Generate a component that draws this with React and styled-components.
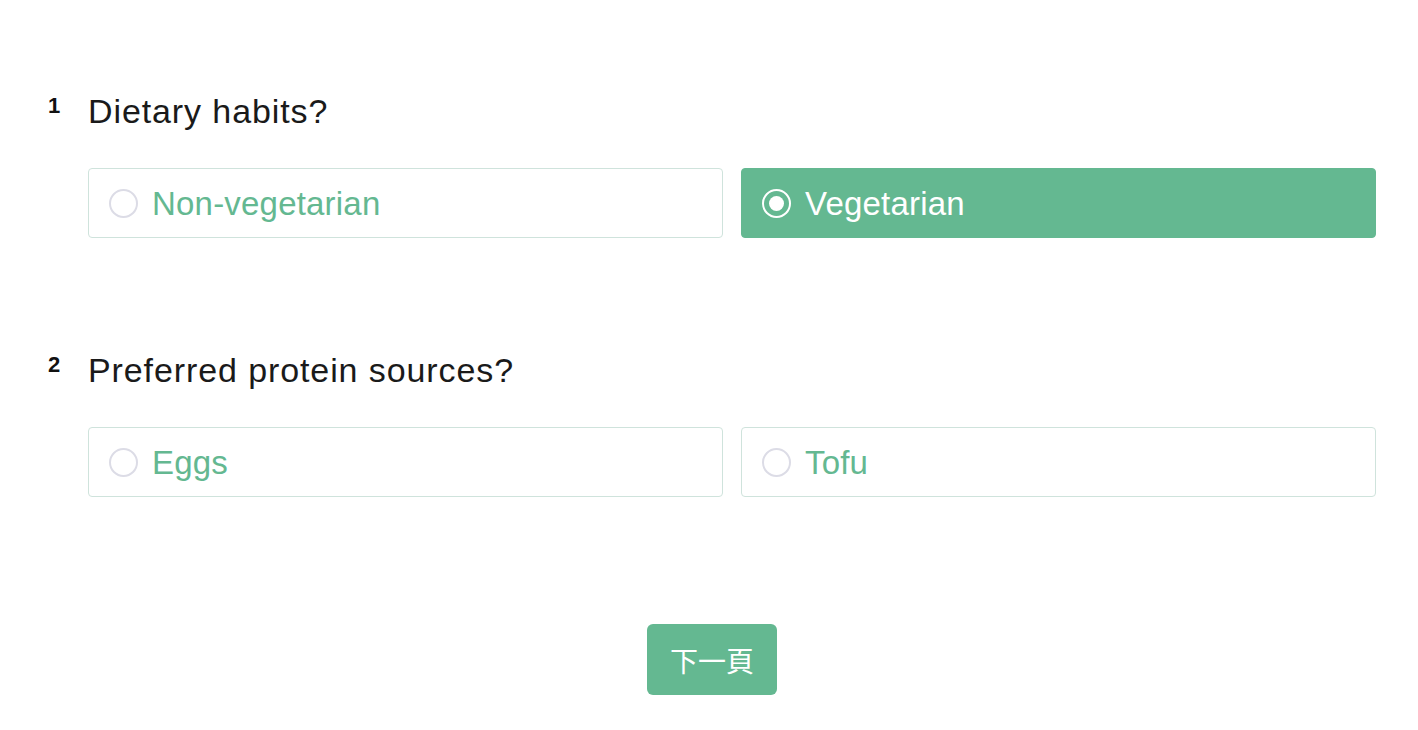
import React, { useState } from 'react';
import styled, { createGlobalStyle } from 'styled-components';

const GlobalStyle = createGlobalStyle`
	body {
		margin: 0;
		background: #fff;
		font-family: "Liberation Sans", Arial, "Noto Sans CJK TC", sans-serif;
	}
`;

const GREEN = '#64b891';

const Page = styled.div`
	padding: 91px 42px 0 48px;
`;

const Question = styled.section`
	& + & {
		margin-top: 112px;
	}
`;

const QuestionHead = styled.div`
	display: flex;
	align-items: flex-start;
`;

const Number = styled.span`
	width: 40px;
	font-size: 22px;
	font-weight: bold;
	color: #111;
	line-height: 30px;
`;

const Title = styled.h2`
	margin: 0;
	font-size: 34px;
	letter-spacing: 0.9px;
	font-weight: normal;
	color: #1a1a1a;
	line-height: 40px;
`;

const Options = styled.div`
	display: grid;
	grid-template-columns: 1fr 1fr;
	gap: 18px;
	margin: 37px 0 0 40px;
`;

const Option = styled.button`
	box-sizing: border-box;
	display: flex;
	align-items: center;
	gap: 14px;
	height: 70px;
	padding: 2px 20px 0;
	border-radius: 4px;
	border: 1px solid ${(p) => (p.$selected ? GREEN : '#cfe3dc')};
	background: ${(p) => (p.$selected ? GREEN : '#fff')};
	color: ${(p) => (p.$selected ? '#fff' : GREEN)};
	font-family: inherit;
	font-size: 33px;
	letter-spacing: 0.2px;
	cursor: pointer;
	text-align: left;
`;

const Radio = styled.span`
	box-sizing: border-box;
	width: 29px;
	height: 29px;
	margin-top: -2px;
	border-radius: 50%;
	border: 2px solid ${(p) => (p.$selected ? '#fff' : '#dcdce6')};
	display: flex;
	align-items: center;
	justify-content: center;
	flex-shrink: 0;

	&::after {
		content: '';
		width: 15px;
		height: 15px;
		border-radius: 50%;
		background: #fff;
		display: ${(p) => (p.$selected ? 'block' : 'none')};
	}
`;

const Footer = styled.div`
	display: flex;
	justify-content: center;
	margin-top: 127px;
`;

const NextButton = styled.button`
	width: 130px;
	height: 71px;
	border: none;
	border-radius: 6px;
	background: ${GREEN};
	color: #fff;
	font-family: "Noto Sans CJK TC", sans-serif;
	font-size: 28px;
	font-weight: 400;
	cursor: pointer;
`;

const questions = [
	{ id: 1, title: 'Dietary habits?', options: ['Non-vegetarian', 'Vegetarian'] },
	{ id: 2, title: 'Preferred protein sources?', options: ['Eggs', 'Tofu'] },
];

export default function App() {
	const [answers, setAnswers] = useState({ 1: 'Vegetarian' });

	return (
		<Page>
			<GlobalStyle />
			{questions.map((q) => (
				<Question key={q.id}>
					<QuestionHead>
						<Number>{q.id}</Number>
						<Title>{q.title}</Title>
					</QuestionHead>
					<Options>
						{q.options.map((opt) => {
							const selected = answers[q.id] === opt;
							return (
								<Option
									key={opt}
									$selected={selected}
									onClick={() => setAnswers({ ...answers, [q.id]: opt })}
								>
									<Radio $selected={selected} />
									{opt}
								</Option>
							);
						})}
					</Options>
				</Question>
			))}
			<Footer>
				<NextButton>下一頁</NextButton>
			</Footer>
		</Page>
	);
}
